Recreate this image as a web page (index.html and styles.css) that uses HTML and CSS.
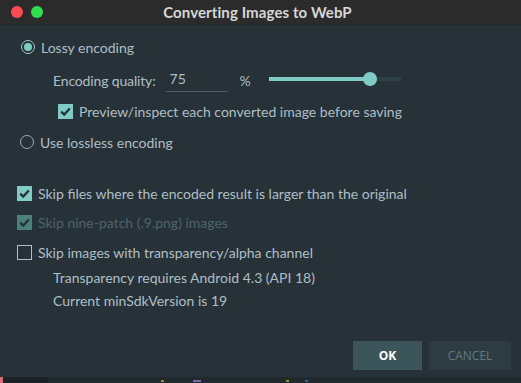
FILE: index.html
```html
<!DOCTYPE html>
<html>
<head>
<meta charset="utf-8">
<link rel="stylesheet" href="styles.css">
</head>
<body>
<div class="window">
  <div class="titlebar">
    <div class="lights"><span class="light red"></span><span class="light green"></span></div>
    <div class="title">Converting Images to WebP</div>
  </div>
  <div class="content">
    <div class="row r-lossy">
      <span class="radio on"></span><span class="label">Lossy encoding</span>
    </div>
    <div class="row r-quality">
      <span class="label">Encoding quality:</span>
      <span class="input">75</span>
      <span class="label pct">%</span>
      <div class="slider"><div class="fill"></div><div class="thumb"></div></div>
    </div>
    <div class="row r-preview">
      <span class="check on"><svg viewBox="0 0 15 15"><path d="M3.2 7.6 L6.2 10.6 L11.8 4.4" /></svg></span>
      <span class="label">Preview/inspect each converted image before saving</span>
    </div>
    <div class="row r-lossless">
      <span class="radio"></span><span class="label">Use lossless encoding</span>
    </div>
    <div class="row r-skip">
      <span class="check on"><svg viewBox="0 0 15 15"><path d="M3.2 7.6 L6.2 10.6 L11.8 4.4" /></svg></span>
      <span class="label">Skip files where the encoded result is larger than the original</span>
    </div>
    <div class="row r-nine">
      <span class="check on disabled"><svg viewBox="0 0 15 15"><path d="M3.2 7.6 L6.2 10.6 L11.8 4.4" /></svg></span>
      <span class="label dim">Skip nine-patch (.9.png) images</span>
    </div>
    <div class="row r-alpha">
      <span class="check"></span>
      <span class="label">Skip images with transparency/alpha channel</span>
    </div>
    <div class="row r-note1"><span class="label">Transparency requires Android 4.3 (API 18)</span></div>
    <div class="row r-note2"><span class="label">Current minSdkVersion is 19</span></div>
    <div class="buttons">
      <div class="btn ok">OK</div>
      <div class="btn cancel">CANCEL</div>
    </div>
  </div>
  <div class="bottomstrip">
    <span class="bs-pink"></span><span class="bs-dark"></span><span class="bs-bit b1"></span><span class="bs-bit b2"></span><span class="bs-bit b3"></span><span class="bs-bit b4"></span>
  </div>
</div>
</body>
</html>
```
FILE: styles.css
```css
html, body {
  margin: 0;
  padding: 0;
  background: #263238;
}
body {
  width: 521px;
  height: 383px;
  overflow: hidden;
  font-family: "Lato", "Liberation Sans", sans-serif;
  font-size: 14px;
  color: #afbec6;
}
.window {
  width: 521px;
  height: 383px;
  display: flex;
  flex-direction: column;
}
.titlebar {
  height: 24px;
  background: #2b2b2b;
  border-bottom: 1px solid #232b2f;
  display: flex;
  align-items: center;
  position: relative;
  flex: none;
}
.lights {
  display: flex;
  gap: 8px;
  padding-left: 11px;
}
.light {
  width: 12px;
  height: 12px;
  border-radius: 50%;
  display: block;
}
.red { background: #fc4b55; }
.green { background: #2ee04f; }
.title {
  flex: 1;
  text-align: center;
  font-weight: bold;
  color: #d6d6d6;
  font-size: 15px;
  margin-right: 49px;
  letter-spacing: 0.1px;
}
.content {
  flex: 1;
  display: flex;
  flex-direction: column;
  padding-left: 17px;
}
.row {
  display: flex;
  align-items: center;
  height: 20px;
}
.r-lossy { margin-top: 12px; padding-left: 4px; }
.r-quality { margin-top: 11px; height: 24px; padding-left: 36px; }
.r-preview { margin-top: 9px; padding-left: 41px; }
.r-lossless { margin-top: 11px; padding-left: 3px; }
.r-skip { margin-top: 31px; }
.r-nine { margin-top: 9px; }
.r-alpha { margin-top: 10px; }
.r-note1 { margin-top: 5px; padding-left: 36px; }
.r-note2 { margin-top: 3px; padding-left: 36px; }

.label { white-space: nowrap; }
.r-quality > .label:first-child { letter-spacing: -0.15px; }
.dim { color: #4f636c; }

.radio {
  width: 14px;
  height: 14px;
  box-sizing: border-box;
  border: 1.5px solid #9aa9b0;
  border-radius: 50%;
  margin-right: 6px;
  display: flex;
  align-items: center;
  justify-content: center;
}
.radio.on { border-color: #9fc9c5; }
.radio.on::after {
  content: "";
  width: 8px;
  height: 8px;
  border-radius: 50%;
  background: #80cbc4;
}
.check {
  width: 15px;
  height: 15px;
  box-sizing: border-box;
  border: 1px solid #b0bec5;
  margin-right: 6px;
  display: flex;
  flex: none;
}
.check.on {
  background: #80cbc4;
  border: none;
}
.check.disabled { background: #4c807d; }
.check svg { width: 15px; height: 15px; }
.check path {
  fill: none;
  stroke: #233036;
  stroke-width: 2.2;
}
.input {
  width: 62px;
  margin-left: 10px;
  padding-left: 4px;
  height: 24px;
  line-height: 22px;
  box-sizing: border-box;
  border-bottom: 1px solid #4d5e66;
}
.pct { margin-left: 12px; }
.slider {
  position: relative;
  margin-left: 18px;
  width: 132px;
  height: 4px;
  background: #2f4045;
  margin-top: -2px;
}
.fill {
  width: 101px;
  height: 4px;
  background: #80cbc4;
}
.thumb {
  position: absolute;
  left: 94px;
  top: -5px;
  width: 14px;
  height: 14px;
  border-radius: 50%;
  background: #80cbc4;
}
.buttons {
  display: flex;
  justify-content: flex-end;
  gap: 7px;
  margin-top: auto;
  margin-bottom: 7px;
  padding-right: 10px;
}
.btn {
  height: 29px;
  display: flex;
  align-items: center;
  justify-content: center;
  font-size: 12px;
  font-family: "Open Sans", "Liberation Sans", sans-serif;
}
.ok {
  width: 69px;
  background: #3b555a;
  color: #ffffff;
  font-weight: bold;
}
.cancel {
  width: 82px;
  background: #2e3c42;
  color: #5d7a84;
}
.bottomstrip {
  height: 6px;
  background: #20292d;
  flex: none;
  display: flex;
  align-items: flex-end;
  position: relative;
}
.bs-pink { width: 3px; height: 6px; background: #d66b7a; }
.bs-dark { width: 45px; height: 6px; background: #1a2226; }
.bs-bit { position: absolute; bottom: 1px; height: 2px; }
.b1 { left: 161px; width: 3px; background: #a08a2a; }
.b2 { left: 193px; width: 8px; background: #7b6aa8; }
.b3 { left: 286px; width: 3px; background: #a08a2a; }
.b4 { left: 305px; width: 3px; background: #2a6aa8; }
```
